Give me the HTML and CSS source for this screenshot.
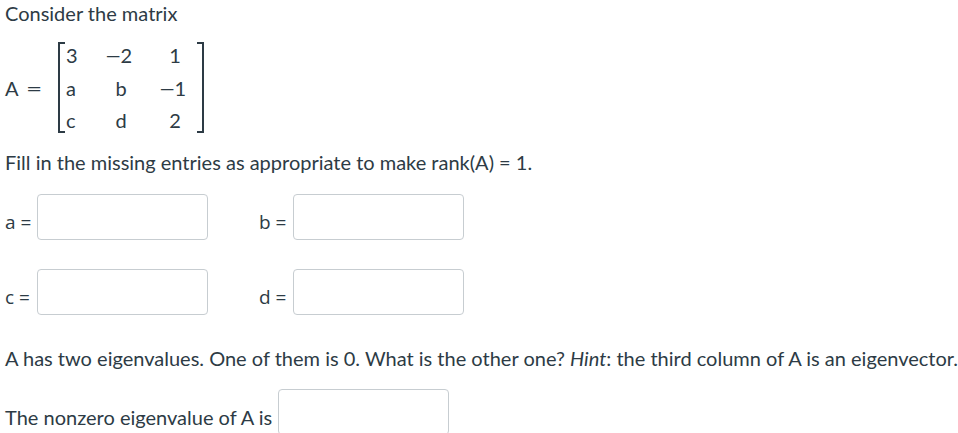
FILE: index.html
```html
<!DOCTYPE html>
<html>
<head>
<meta charset="utf-8">
<link rel="stylesheet" href="styles.css">
</head>
<body>
<div class="page">
  <p class="line">Consider the matrix</p>
  <div class="matrix">
    <div class="lhs"><span class="var">A</span><span class="eq">=</span></div>
    <span class="bracket left"></span>
    <div class="entries">
      <span>3</span><span><span class="minus">−</span>2</span><span>1</span>
      <span>a</span><span>b</span><span><span class="minus">−</span>1</span>
      <span>c</span><span>d</span><span>2</span>
    </div>
    <span class="bracket right"></span>
  </div>
  <p class="line fill">Fill in the missing entries as appropriate to make rank(A) = 1.</p>
  <div class="fields">
    <label class="lbl">a =</label><input class="box" type="text"><span></span>
    <label class="lbl">b =</label><input class="box" type="text">
    <label class="lbl">c =</label><input class="box" type="text"><span></span>
    <label class="lbl">d =</label><input class="box" type="text">
  </div>
  <p class="line eig">A has two eigenvalues. One of them is 0. What is the other one? <em>Hint</em>: the third column of A is an eigenvector.</p>
  <div class="answer">
    <span class="ans-text">The nonzero eigenvalue of A is</span>
    <input class="box" type="text">
  </div>
</div>
</body>
</html>
```

FILE: styles.css
```css
html, body {
  margin: 0;
  padding: 0;
  background: #ffffff;
}
body {
  font-family: Lato, "Open Sans", sans-serif;
  color: #2d3b45;
  font-size: 20px;
}
.page {
  padding: 0 5px;
}
.line {
  margin: 0;
  line-height: 26px;
  white-space: nowrap;
}
.matrix {
  display: flex;
  align-items: center;
  margin-top: 13px;
  height: 97px;
}
.lhs {
  width: 53px;
  line-height: 26px;
  display: flex;
  align-items: center;
}
.var {
  width: 21px;
}
.eq {
  display: inline-block;
  transform: scaleX(1.4);
  transform-origin: left center;
}
.bracket {
  width: 5px;
  height: 87px;
  border: 2px solid #2d3b45;
  flex: none;
}
.bracket.left {
  border-right: none;
}
.bracket.right {
  border-left: none;
}
.entries {
  display: grid;
  grid-template-columns: 15px 80px 28px;
  grid-auto-rows: 32.5px;
  align-items: center;
  text-align: center;
  margin-right: 8px;
  padding-left: 1px;
}
.entries span {
  line-height: 26px;
  white-space: nowrap;
}
.entries > span:nth-child(3n+1) {
  text-align: left;
}
.minus {
  display: inline-block;
  transform: scaleX(1.45);
  transform-origin: right center;
  margin-right: -1px;
}
.fill {
  margin-top: 13px;
}
.fields {
  display: grid;
  grid-template-columns: 32px 171px 51px 34px 171px;
  row-gap: 29px;
  align-items: center;
  margin-top: 19px;
}
.lbl {
  font-family: "Open Sans", sans-serif;
  font-size: 19px;
  color: #2d3b45;
  padding-top: 10px;
}
.box {
  box-sizing: border-box;
  width: 171px;
  height: 46px;
  border: 1px solid #c7cdd1;
  border-radius: 4px;
  background: #ffffff;
  margin: 0;
  padding: 0;
}
.eig {
  margin-top: 30px;
}
.answer {
  display: flex;
  align-items: flex-start;
  gap: 6px;
  margin-top: 18px;
}
.ans-text {
  padding-top: 15px;
  line-height: 26px;
}
```
